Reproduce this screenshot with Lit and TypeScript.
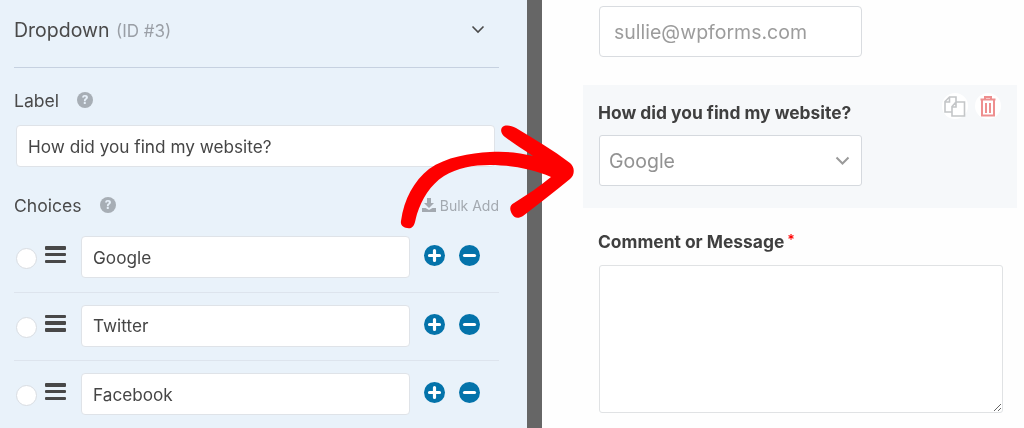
import { LitElement, html, css, svg } from "lit";
import { customElement } from "lit/decorators.js";

const help = html`<svg class="help" viewBox="0 0 16 16" aria-hidden="true"><circle cx="8" cy="8" r="8" fill="#a7aeb5"/><text x="8" y="12" text-anchor="middle" font-size="11.5" font-weight="800" fill="#e8f1fa" font-family="Inter, sans-serif">?</text></svg>`;

const plus = html`<svg class="act" viewBox="0 0 21 21"><circle cx="10.5" cy="10.5" r="10.5" fill="#0473aa"/><path d="M10.5 5.500v10M5.500 10.500h10" stroke="#fff" stroke-width="3.200" stroke-linecap="round"/></svg>`;
const minus = html`<svg class="act" viewBox="0 0 21 21"><circle cx="10.5" cy="10.5" r="10.5" fill="#0473aa"/><path d="M5.500 10.500h10" stroke="#fff" stroke-width="3.200" stroke-linecap="round"/></svg>`;

const arrow = svg`<path fill="#fe0000" d="M401 221 C404 199 414 181 429 169 C446 157 470 153 490 152 C507 151 521 153 533 156 C524 150 513 143 505 137 C500 133 500 128 504 126 C508 125 512 126 516 128 C534 139 553 150 570 163 C575 167 575 175 570 179 C555 191 539 204 523 216 C518 219 514 218 512 214 C509 209 510 205 514 203 C527 195 540 186 551 177 C533 169 510 165 490 165 C473 165 457 168 444 176 C430 185 422 199 417 214 C415 221 415 226 411 228 C405 229 400 226 401 221 Z"/>`;

@customElement("app-root")
export class AppRoot extends LitElement {
  static styles = css`
    :host {
      display: grid;
      grid-template-columns: 527px 15px 1fr;
      width: 1024px;
      height: 428px;
      overflow: hidden;
      position: relative;
      background: #fefefe;
      font-family: Inter, "Liberation Sans", sans-serif;
      color: #464646;
      filter: blur(0.35px);
    }
    * { box-sizing: border-box; }
    .left { background: #e9f2fa; padding: 0 28px 0 14px; display: flex; flex-direction: column; height: 428px; overflow: hidden; }
    .divider { background: #666; }
    .head { height: 68px; flex: none; border-bottom: 1px solid #c6d1e0; display: flex; align-items: flex-start; justify-content: space-between; padding: 18px 14px 0 0; }
    .title { font-size: 19.5px; line-height: 24px; color: #4a4a4a; }
    .title small { font-size: 17px; color: #9a9fa6; margin-left: 1px; }
    .chev { width: 14px; height: 9px; margin-top: 7px; }
    .fieldhead { display: flex; align-items: center; height: 20px; font-size: 17.6px; color: #4a4a4a; flex: none; }
    .fieldhead.a { margin-top: 22px; }
    .fieldhead.b { margin-top: 28px; }
    .help { width: 16px; height: 16px; margin-left: 18px; }
    .bulk { margin-left: auto; margin-right: 0; display: flex; align-items: center; gap: 4px; font-size: 14px; color: #a3a9b0; }
    .bulk svg { width: 14px; height: 14px; }
    input, textarea { font-family: inherit; outline: none; display: block; }
    .text { background: #fff; border: 1px solid #dfe3e8; border-radius: 4px; height: 42px; font-size: 17.2px; color: #454545; padding: 0 11px; }
    .labelinput { margin: 15px 4px 0 2px; flex: none; width: 479px; }
    .rows { margin-top: 21px; }
    .row { display: flex; align-items: flex-start; height: 56.5px; margin-bottom: 12px; border-bottom: 1.5px solid #dde4ed; }
    .row:last-child { border-bottom: 0; }
    .radio { width: 21px; height: 21px; border-radius: 50%; background: #fff; border: 1px solid #d9dde2; margin: 12px 0 0 2px; flex: none; }
    .bars { width: 21px; margin: 10px 0 0 8px; flex: none; display: flex; flex-direction: column; gap: 3.3px; }
    .bars i { display: block; height: 3.6px; background: #484848; border-radius: 1px; }
    .choice { width: 329px; margin-left: 15px; flex: none; }
    .act { width: 21px; height: 21px; flex: none; margin-top: 9px; }
    .choice + .act { margin-left: 14px; }
    .act + .act { margin-left: 14px; }
    .right { display: flex; flex-direction: column; padding: 6px 7px 0 41px; }
    .email { width: 263px; height: 51px; margin-left: 16px; flex: none; font-size: 19.5px; padding: 0 14px; border: 1px solid #d9dce0; }
    .email::placeholder { color: #9c9c9c; opacity: 1; }
    .hl { position: relative; margin-top: 28px; height: 123px; flex: none; background: #f6f8fa; padding: 16px 16px 0 15px; }
    .flabel { font-size: 17.4px; line-height: 24px; font-weight: 700; color: #3f3f3f; }
    .sel { margin: 10px 0 0 1px; width: 263px; height: 51px; border: 1px solid #d5d9de; border-radius: 3px; background: #fff; display: flex; align-items: center; justify-content: space-between; padding: 0 11px 0 9px; font-size: 19.5px; color: #929292; }
    .sel svg { width: 15px; height: 9px; }
    .tools { position: absolute; top: 8px; right: 16px; display: flex; gap: 7px; }
    .tool { width: 26px; height: 26px; border-radius: 50%; background: #fff; display: flex; align-items: center; justify-content: center; }
    .tool svg { width: 24px; height: 24px; }
    .comment { padding-left: 15px; margin-top: 22px; }
    .star { color: #f00; font-size: 14px; position: relative; top: -3px; margin-left: 3px; font-weight: 600; }
    .ta { display: block; margin: 10px 0 0 1px; width: 404px; height: 148px; border: 1.5px solid #e0e2e4; border-radius: 3px; background: #fff; resize: both; }
    .arrow { position: absolute; inset: 0; width: 1024px; height: 428px; pointer-events: none; }
  `;

  private row(name: string) {
    return html`<div class="row">
      <span class="radio"></span>
      <span class="bars"><i></i><i></i><i></i></span>
      <input class="text choice" .value=${name} />
      ${plus}${minus}
    </div>`;
  }

  render() {
    return html`
      <section class="left">
        <div class="head">
          <span class="title">Dropdown <small>(ID #3)</small></span>
          <svg class="chev" viewBox="0 0 14 9"><path d="M1.500 1.500 7 7l5.500-5.500" fill="none" stroke="#4a4a4a" stroke-width="1.600"/></svg>
        </div>
        <div class="fieldhead a">Label ${help}</div>
        <input class="text labelinput" value="How did you find my website?" />
        <div class="fieldhead b">Choices ${help}
          <span class="bulk"><svg viewBox="0 0 14 14"><path fill="#a3a9b0" d="M5 0h4v5h3L7 10 2 5h3zM0 10h3.500L7 12l3.500-2H14v4H0z"/></svg>Bulk Add</span>
        </div>
        <div class="rows">${this.row("Google")}${this.row("Twitter")}${this.row("Facebook")}</div>
      </section>
      <div class="divider"></div>
      <section class="right">
        <input class="text email" placeholder="sullie@wpforms.com" />
        <div class="hl">
          <div class="flabel">How did you find my website?</div>
          <div class="sel">Google <svg viewBox="0 0 15 9"><path d="M1.500 1.500 7.500 7.500l6-6" fill="none" stroke="#9a9a9a" stroke-width="2"/></svg></div>
          <div class="tools">
            <span class="tool"><svg viewBox="0 0 24 24"><path fill="none" stroke="#c4c6c8" stroke-width="1.600" d="M9 18H2V7.500L6.500 3H13v5M9 22V12.500L13 8h8.500v14zM13 8v5H9M6.500 3v5H2"/></svg></span>
            <span class="tool"><svg viewBox="0 0 24 24"><path fill="none" stroke="#ee8f8f" stroke-width="2" d="M4.500 5.500h15M9 5V3h6v2M6 6v15.500h12V6M10 9v10M14 9v10"/></svg></span>
          </div>
        </div>
        <div class="comment">
          <div class="flabel">Comment or Message<span class="star">*</span></div>
          <textarea class="ta"></textarea>
        </div>
      </section>
      <svg class="arrow" viewBox="0 0 1024 428">${arrow}</svg>
    `;
  }
}
